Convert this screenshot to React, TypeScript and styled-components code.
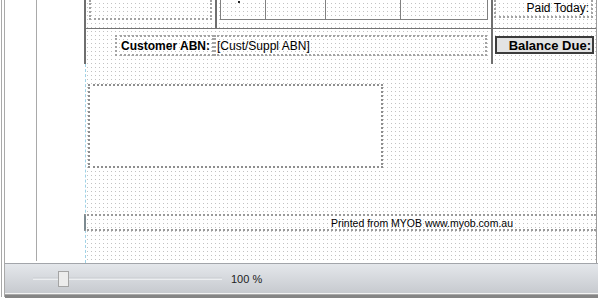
import React from 'react';
import styled, { createGlobalStyle } from 'styled-components';

const GlobalStyle = createGlobalStyle`
  html, body {
    margin: 0;
    padding: 0;
    background: #fff;
  }
  body {
    font-family: "Liberation Sans", Arial, sans-serif;
  }
  * {
    box-sizing: border-box;
  }
`;

const Window = styled.div`
  width: 598px;
  height: 299px;
  display: flex;
  overflow: hidden;
  background: #fff;
`;

const LeftEdge = styled.div`
  width: 4px;
  height: 297px;
  margin-left: 1px;
  border-left: 1px solid #a9a9a9;
  border-right: 1px solid #a9a9a9;
  flex-shrink: 0;
`;

const Main = styled.div`
  flex: 1;
  display: flex;
  flex-direction: column;
`;

const Workspace = styled.div`
  height: 264px;
  display: flex;
  border-bottom: 1px solid #a2a5aa;
`;

const Rail = styled.div`
  width: 79px;
  display: flex;
  padding-left: 31px;
  flex-shrink: 0;
`;

const RailLine = styled.div`
  width: 1px;
  height: 261px;
  background: #a9a9a9;
`;

const Canvas = styled.div`
  width: 513px;
  display: flex;
  flex-direction: column;
  border-right: 1px solid #9c9c9c;
  background-color: #fff;
  background-image:
    linear-gradient(to right, #fff 3px, transparent 3px),
    linear-gradient(to bottom, #fff 3px, #c2c2c2 3px);
  background-size: 4px 4px;
`;

const UpperBands = styled.div`
  display: flex;
  height: 64px;
  border-left: 2px solid #6f6f6f;
`;

const BandColumn = styled.div<{ $width?: number }>`
  display: flex;
  flex-direction: column;
  width: ${(p) => (p.$width ? `${p.$width}px` : 'auto')};
  flex: ${(p) => (p.$width ? '0 0 auto' : '1')};
`;

const TopBand = styled.div`
  height: 29px;
  display: flex;
  border-bottom: 1px solid #747474;
`;

const MidBand = styled.div<{ $padLeft: number; $padTop: number }>`
  flex: 1;
  display: flex;
  align-items: flex-start;
  padding-left: ${(p) => p.$padLeft}px;
  padding-top: ${(p) => p.$padTop}px;
`;

const VRule = styled.div`
  width: 2px;
  background: #6f6f6f;
  flex-shrink: 0;
`;

const Cell = styled.div<{ $width: number; $padLeft: number }>`
  width: ${(p) => p.$width}px;
  padding-left: ${(p) => p.$padLeft}px;
  flex-shrink: 0;
`;

const FieldBox = styled.div<{ $width: number; $height: number; $align?: string; $open?: boolean }>`
  width: ${(p) => p.$width}px;
  height: ${(p) => p.$height}px;
  border: 2px dotted #a3a3a3;
  border-top-width: ${(p) => (p.$open ? 0 : 2)}px;
  display: flex;
  align-items: center;
  justify-content: ${(p) => p.$align || 'flex-start'};
  padding: 0 2px 0 1px;
  font-size: 12px;
  color: #000;
  white-space: nowrap;
  overflow: hidden;
`;

const Bold = styled.span`
  font-weight: bold;
`;

const TotalBox = styled.div`
  width: 99px;
  height: 18px;
  border: 2px solid #3c3c3c;
  background: #e3e3e3;
  display: flex;
  align-items: center;
  justify-content: flex-end;
  padding-right: 1px;
  font-size: 13px;
  font-weight: bold;
  color: #000;
  white-space: nowrap;
`;

const Table = styled.div`
  width: 268px;
  height: 20px;
  display: grid;
  grid-template-columns: 45px 60px 75px 1fr;
  border: 1px solid #808080;
  border-top: none;
`;

const TableCell = styled.div`
  border-right: 1px solid #808080;
  &:last-child {
    border-right: none;
  }
`;

/* the descender of a header glyph that is scrolled out of view */
const GlyphTail = styled.span`
  display: block;
  width: 2px;
  height: 2px;
  margin: 1px 0 0 17px;
  background: #222;
`;

const LowerArea = styled.div`
  flex: 1;
  display: flex;
  flex-direction: column;
  margin-left: 1px;
  border-left: 1px dashed #9fd2e6;
`;

const MemoBox = styled.div`
  width: 295px;
  height: 84px;
  margin: 20px 0 0 2px;
  border: 2px dotted #8e8e8e;
  background: #fff;
`;

const FooterBand = styled.div`
  height: 17px;
  margin-top: 46px;
  margin-left: -2px;
  border-top: 2px dotted #9a9a9a;
  border-bottom: 2px dotted #9a9a9a;
  border-left: 2px solid #7c8a90;
  display: flex;
  align-items: center;
  padding-left: 245px;
  font-size: 10.5px;
  color: #000;
  white-space: nowrap;
`;

const StatusBar = styled.div`
  height: 30px;
  display: flex;
  align-items: center;
  padding-left: 28px;
  background: linear-gradient(to bottom, #e4e7eb, #c7cacf);
  border-bottom: 1px solid #f4f4f4;
`;

const Slider = styled.div`
  position: relative;
  width: 189px;
  height: 16px;
  display: flex;
  align-items: center;
`;

const Track = styled.div`
  width: 100%;
  height: 3px;
  background: #d9dce0;
  border-top: 1px solid #d0d3d7;
  border-bottom: 1px solid #eceef0;
`;

const Thumb = styled.div<{ $left: number }>`
  position: absolute;
  top: 0;
  left: ${(p) => p.$left}px;
  width: 11px;
  height: 16px;
  background: #ececec;
  border: 1px solid #a4a4a4;
`;

const ZoomLabel = styled.span`
  margin-left: 9px;
  font-size: 11px;
  color: #222;
`;

const BottomEdge = styled.div`
  height: 4px;
  background: #858585;
  border-top: 1px solid #a9a9a9;
`;

export default function App() {
  return (
    <>
      <GlobalStyle />
      <Window>
        <LeftEdge />
        <Main>
          <Workspace>
            <Rail>
              <RailLine />
            </Rail>
            <Canvas>
              <UpperBands>
                <BandColumn $width={405}>
                  <TopBand>
                    <Cell $width={129} $padLeft={3}>
                      <FieldBox $width={123} $height={20} $open />
                    </Cell>
                    <VRule />
                    <Cell $width={274} $padLeft={3}>
                      <Table>
                        <TableCell>
                          <GlyphTail />
                        </TableCell>
                        <TableCell />
                        <TableCell />
                        <TableCell />
                      </Table>
                    </Cell>
                  </TopBand>
                  <MidBand $padLeft={29} $padTop={6}>
                    <FieldBox $width={99} $height={21} $align="flex-end">
                      <Bold>Customer ABN:</Bold>
                    </FieldBox>
                    <FieldBox $width={273} $height={21}>
                      [Cust/Suppl ABN]
                    </FieldBox>
                  </MidBand>
                </BandColumn>
                <VRule />
                <BandColumn>
                  <TopBand>
                    <Cell $width={103} $padLeft={1}>
                      <FieldBox $width={99} $height={18} $align="flex-end" $open>
                        Paid Today:
                      </FieldBox>
                    </Cell>
                  </TopBand>
                  <MidBand $padLeft={2} $padTop={7}>
                    <TotalBox>Balance Due:</TotalBox>
                  </MidBand>
                </BandColumn>
              </UpperBands>
              <LowerArea>
                <MemoBox />
                <FooterBand>Printed from MYOB www.myob.com.au</FooterBand>
              </LowerArea>
            </Canvas>
          </Workspace>
          <StatusBar>
            <Slider>
              <Track />
              <Thumb $left={25} />
            </Slider>
            <ZoomLabel>100 %</ZoomLabel>
          </StatusBar>
          <BottomEdge />
        </Main>
      </Window>
    </>
  );
}
